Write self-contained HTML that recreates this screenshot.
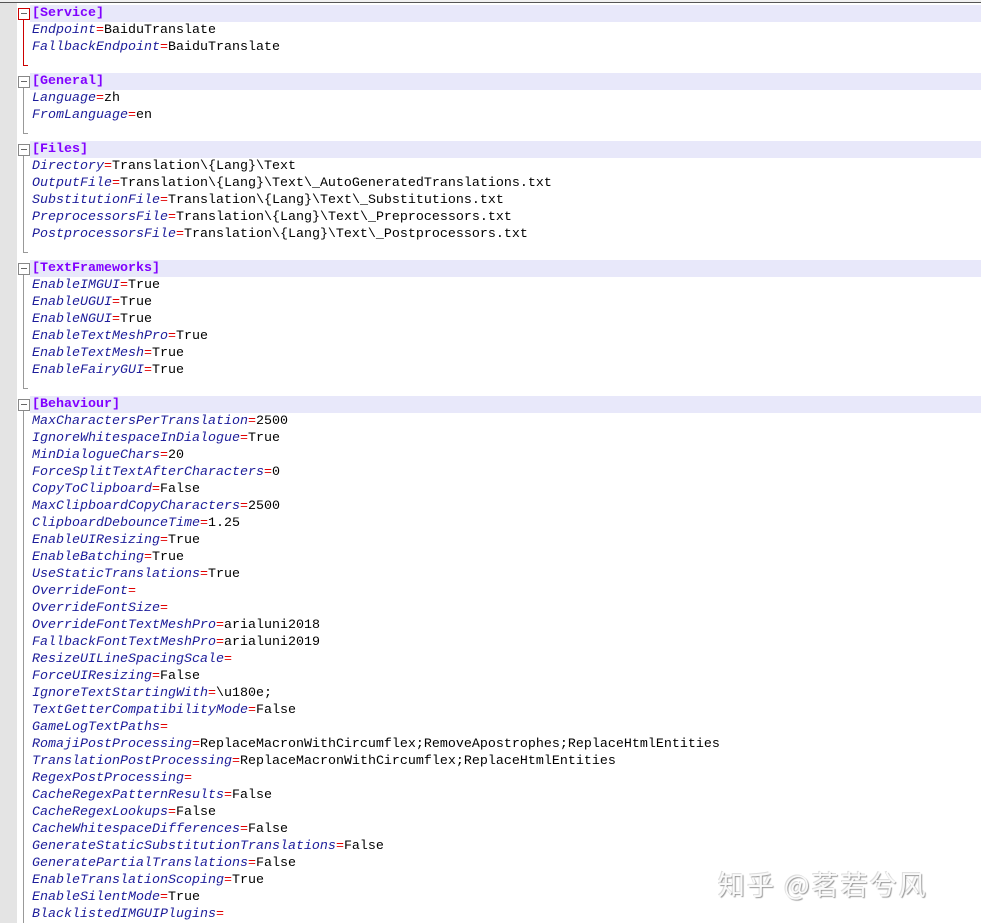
<!DOCTYPE html>
<html><head><meta charset="utf-8"><style>
html,body{margin:0;width:981px;height:923px;overflow:hidden;}
body{background:#fff;position:relative;font-family:"Liberation Mono",monospace;font-size:13.33px;}
#gut{position:absolute;left:0;top:0;width:17px;height:923px;background:#e4e4e4}
#top{position:absolute;left:0;top:0;width:981px;height:2px;background:#f0f0f0;border-bottom:1px solid #555}
.l{position:absolute;left:30px;right:0;height:17px;line-height:17px;padding-left:2px;white-space:pre;color:#000}
.s{background:#e8e8fa;color:#8000ff;font-weight:bold}
.k{color:#1c1c9a;font-style:italic}
.e{color:#e00000}
.box{position:absolute;left:18px;width:10px;height:10px;border:1px solid #888;background:#fff}
.box:after{content:"";position:absolute;left:2px;top:4px;width:6px;height:1px;background:#666}
.vl{position:absolute;left:23px;width:1px;background:#999}
.hl{position:absolute;left:23px;width:5px;height:1px;background:#999}
.wm{position:absolute;left:718px;top:864px;font-family:"Noto Sans CJK SC",sans-serif;font-size:27px;color:#fafafa;text-shadow:1px 1px 1px #999,-1px -1px 0 #ddd;letter-spacing:2px}
</style></head><body>
<div id="gut"></div><div id="top"></div>
<div id="c"></div>
<div class="wm">知乎 @茗若兮风</div>
<script>
var L=[["S","Service"],["Endpoint","BaiduTranslate"],["FallbackEndpoint","BaiduTranslate"],[""],
["S","General"],["Language","zh"],["FromLanguage","en"],[""],
["S","Files"],["Directory","Translation\\{Lang}\\Text"],["OutputFile","Translation\\{Lang}\\Text\\_AutoGeneratedTranslations.txt"],["SubstitutionFile","Translation\\{Lang}\\Text\\_Substitutions.txt"],["PreprocessorsFile","Translation\\{Lang}\\Text\\_Preprocessors.txt"],["PostprocessorsFile","Translation\\{Lang}\\Text\\_Postprocessors.txt"],[""],
["S","TextFrameworks"],["EnableIMGUI","True"],["EnableUGUI","True"],["EnableNGUI","True"],["EnableTextMeshPro","True"],["EnableTextMesh","True"],["EnableFairyGUI","True"],[""],
["S","Behaviour"],["MaxCharactersPerTranslation","2500"],["IgnoreWhitespaceInDialogue","True"],["MinDialogueChars","20"],["ForceSplitTextAfterCharacters","0"],["CopyToClipboard","False"],["MaxClipboardCopyCharacters","2500"],["ClipboardDebounceTime","1.25"],["EnableUIResizing","True"],["EnableBatching","True"],["UseStaticTranslations","True"],["OverrideFont",""],["OverrideFontSize",""],["OverrideFontTextMeshPro","arialuni2018"],["FallbackFontTextMeshPro","arialuni2019"],["ResizeUILineSpacingScale",""],["ForceUIResizing","False"],["IgnoreTextStartingWith","\\u180e;"],["TextGetterCompatibilityMode","False"],["GameLogTextPaths",""],["RomajiPostProcessing","ReplaceMacronWithCircumflex;RemoveApostrophes;ReplaceHtmlEntities"],["TranslationPostProcessing","ReplaceMacronWithCircumflex;ReplaceHtmlEntities"],["RegexPostProcessing",""],["CacheRegexPatternResults","False"],["CacheRegexLookups","False"],["CacheWhitespaceDifferences","False"],["GenerateStaticSubstitutionTranslations","False"],["GeneratePartialTranslations","False"],["EnableTranslationScoping","True"],["EnableSilentMode","True"],["BlacklistedIMGUIPlugins",""]];
var h="",T=4.5,start=-1,col;
function esc(s){return s.replace(/&/g,"&amp;").replace(/</g,"&lt;")}
function close(i,tick){ if(start<0)return; var y0=T+start*17+15,y1=T+i*17+9; h+='<div class="vl" style="top:'+y0+'px;height:'+(y1-y0)+'px;background:'+col+'"></div>'+(tick?'<div class="hl" style="top:'+y1+'px;background:'+col+'"></div>':'');}
for(var i=0;i<L.length;i++){var r=L[i],t=T+i*17;
 if(r[0]=="S"){ if(start>=0)close(i-1,1); start=i; col=i==0?"#c00":"#999";
  h+='<div class="l s" style="top:'+t+'px">['+r[1]+']</div><div class="box" style="top:'+(t+3)+'px;border-color:'+(i==0?"#c00":"#888")+'"></div>';}
 else if(r[0]!=="") h+='<div class="l" style="top:'+t+'px"><span class="k">'+r[0]+'</span><span class="e">=</span>'+esc(r[1])+'</div>';
}
close(L.length,0);
document.getElementById("c").innerHTML=h;
</script>
</body></html>
